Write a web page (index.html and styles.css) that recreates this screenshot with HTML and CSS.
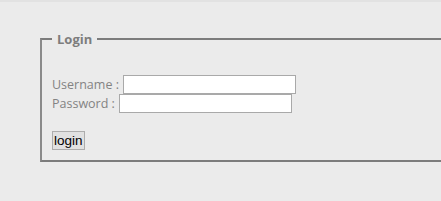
FILE: index.html
```html
<!DOCTYPE html>
<html lang="en">
<head>
    <meta charset="UTF-8">
    <title>Login</title>
    <link rel="stylesheet" href="styles.css">
</head>
<body>
    <div class="page">
        <form class="login-form" onsubmit="return false;">
            <fieldset class="login-box">
                <legend>Login</legend>
                <div class="field">
                    <label for="username">Username :</label>
                    <input type="text" id="username" name="username">
                </div>
                <div class="field">
                    <label for="password">Password :</label>
                    <input type="password" id="password" name="password">
                </div>
                <button type="submit" class="login-btn">login</button>
            </fieldset>
        </form>
    </div>
</body>
</html>
```

FILE: styles.css
```css
html, body { margin: 0; padding: 0; }
body { background-color: #ebebeb; font-family: "Open Sans", "Noto Sans", sans-serif; overflow: hidden; }
.page { border-top: 2px solid #e2e2e2; padding: 28px 0 0 40px; }
.login-form { width: 401px; overflow: hidden; }

.login-box { width: 480px; margin: 0; padding: 27px 10px 10px; border: 2px solid #8a8a8a; border-top-color: #7c7c7c; border-bottom-color: #7c7c7c; }
.login-box legend { padding: 0 5px; color: #7d7d7d; font-weight: bold; font-size: 13px; }

.field { font-size: 12.5px; color: #838383; height: 19px; line-height: 19px; }
.field label { margin-right: 1px; }
.field input { width: 171px; height: 17px; padding: 0; border: 1px solid #a9a9a9; background: white; vertical-align: top; box-sizing: content-box; }

.login-btn { margin-top: 18px; padding: 0 1px; font-family: "Liberation Sans", Arial, sans-serif; font-size: 13.5px; color: black; background: #e1e1e1; border: 1px solid #adadad; height: 19px; line-height: 16px; }
```
